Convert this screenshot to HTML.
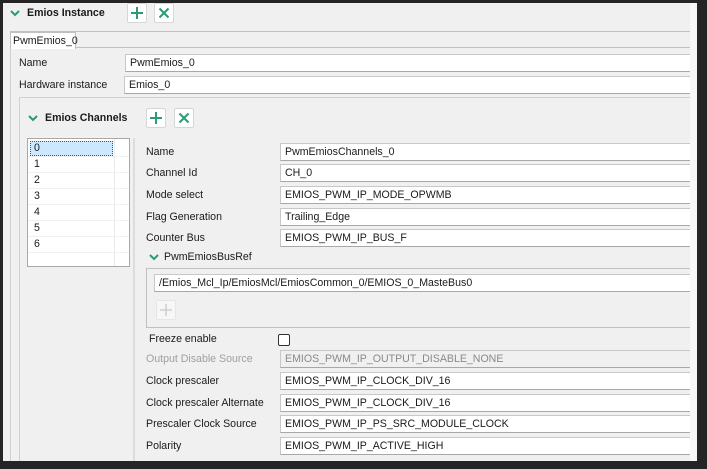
<!DOCTYPE html>
<html><head><style>
*{box-sizing:border-box;margin:0;padding:0}
body{width:707px;height:469px;background:#252526;position:relative;overflow:hidden;font-family:"Liberation Sans",sans-serif;font-size:10.6px;color:#1a1a1a}
.a{position:absolute}
.panel{left:3px;top:3px;width:687px;height:458px;background:#f0f0f0}
.strip{left:690px;top:3px;width:7px;height:458px;background:#f7f7f7}
.inp{position:absolute;background:#fff;border:1px solid #c8c8c8;border-bottom:1px solid #a8a8a8;height:18px;line-height:16px;padding-left:4px;border-right:none;white-space:nowrap}
.lbl{position:absolute;white-space:nowrap;line-height:14px}
.btn{position:absolute;width:20px;height:20px;background:#fff;border:1px solid #d6d6d6;border-radius:2px}
.chev{position:absolute;width:12px;height:8px}
.b{font-weight:bold}
</style></head><body>
<div class="a panel"></div>
<div class="a strip"></div>
<svg class="chev" style="left:9px;top:9px" viewBox="0 0 12 8"><path d="M2 2l4 4 4-4" stroke="#2a9a78" stroke-width="2" fill="none"/></svg>
<div class="lbl b" style="left:27px;top:6px">Emios Instance</div>
<div class="btn" style="left:127px;top:3px"><svg width="18" height="18"><path d="M9 3v12M3 9h12" stroke="#2a9a78" stroke-width="2"/></svg></div>
<div class="btn" style="left:154px;top:3px"><svg width="18" height="18"><path d="M4.5 4.5l9 9M13.5 4.5l-9 9" stroke="#2a9a78" stroke-width="2"/></svg></div>
<div class="a" style="left:10px;top:31px;width:680px;height:1px;background:#c0c0c0"></div>
<div class="a" style="left:10px;top:47px;width:680px;height:1px;background:#c0c0c0"></div>
<div class="a" style="left:10px;top:32px;width:66px;height:17px;background:#fff;border:1px solid #c0c0c0;border-bottom:none;padding:2px 0 0 2px;white-space:nowrap">PwmEmios_0</div>
<div class="a" style="left:10px;top:49px;width:680px;height:412px;background:#f0f0f0;border-left:1px solid #d0d0d0"></div>
<div class="lbl" style="left:19px;top:56px">Name</div>
<div class="inp" style="left:125px;top:54px;width:565px">PwmEmios_0</div>
<div class="lbl" style="left:19px;top:78px">Hardware instance</div>
<div class="inp" style="left:124px;top:76px;width:566px">Emios_0</div>
<div class="a" style="left:19px;top:97px;width:671px;height:364px;border:1px solid #d0d0d0;border-right:none;border-bottom:none"></div>
<svg class="chev" style="left:27px;top:114px" viewBox="0 0 12 8"><path d="M2 2l4 4 4-4" stroke="#2a9a78" stroke-width="2" fill="none"/></svg>
<div class="lbl b" style="left:45px;top:111px">Emios Channels</div>
<div class="btn" style="left:146px;top:108px"><svg width="18" height="18"><path d="M9 3v12M3 9h12" stroke="#2a9a78" stroke-width="2"/></svg></div>
<div class="btn" style="left:174px;top:108px"><svg width="18" height="18"><path d="M4.5 4.5l9 9M13.5 4.5l-9 9" stroke="#2a9a78" stroke-width="2"/></svg></div>
<div class="a" style="left:27px;top:138px;width:103px;height:129px;background:#fff;border:1px solid #a8a8a8"></div>
<div class="a" style="left:114px;top:139px;width:1px;height:127px;background:#eaeaea"></div>
<div class="a" style="left:30px;top:141px;width:83px;height:15px;background:#cce8ff;border:1px dotted #555"></div>
<div class="lbl" style="left:34px;top:141px">0</div>
<div class="lbl" style="left:34px;top:157px">1</div>
<div class="lbl" style="left:34px;top:173px">2</div>
<div class="lbl" style="left:34px;top:189px">3</div>
<div class="lbl" style="left:34px;top:205px">4</div>
<div class="lbl" style="left:34px;top:221px">5</div>
<div class="lbl" style="left:34px;top:237px">6</div>
<div class="a" style="left:28px;top:156px;width:101px;height:1px;background:#f0f0f0;box-shadow:0 16px #f0f0f0,0 32px #f0f0f0,0 48px #f0f0f0,0 64px #f0f0f0,0 80px #f0f0f0,0 96px #f0f0f0"></div>
<div class="a" style="left:133px;top:138px;width:2px;height:323px;background:#dcdcdc"></div>
<div class="lbl" style="left:146px;top:145px">Name</div>
<div class="inp" style="left:280px;top:143px;width:410px">PwmEmiosChannels_0</div>
<div class="lbl" style="left:146px;top:166px">Channel Id</div>
<div class="inp" style="left:280px;top:164px;width:410px">CH_0</div>
<div class="lbl" style="left:146px;top:188px">Mode select</div>
<div class="inp" style="left:280px;top:186px;width:410px">EMIOS_PWM_IP_MODE_OPWMB</div>
<div class="lbl" style="left:146px;top:210px">Flag Generation</div>
<div class="inp" style="left:280px;top:208px;width:410px">Trailing_Edge</div>
<div class="lbl" style="left:146px;top:231px">Counter Bus</div>
<div class="inp" style="left:280px;top:229px;width:410px">EMIOS_PWM_IP_BUS_F</div>
<svg class="chev" style="left:148px;top:253px" viewBox="0 0 12 8"><path d="M2 2l4 4 4-4" stroke="#2a9a78" stroke-width="2" fill="none"/></svg>
<div class="lbl" style="left:164px;top:250px">PwmEmiosBusRef</div>
<div class="a" style="left:146px;top:268px;width:544px;height:60px;border:1px solid #c0c0c0;border-right:none"></div>
<div class="inp" style="left:154px;top:274px;width:536px">/Emios_Mcl_Ip/EmiosMcl/EmiosCommon_0/EMIOS_0_MasteBus0</div>
<div class="a" style="left:156px;top:300px;width:20px;height:20px;background:#f7f7f7;border:1px solid #e6e6e6;border-radius:2px"><svg width="18" height="18"><path d="M9 3v12M3 9h12" stroke="#c8c8c8" stroke-width="1.3"/></svg></div>
<div class="lbl" style="left:149px;top:332px">Freeze enable</div>
<div class="a" style="left:278px;top:334px;width:12px;height:12px;background:#fff;border:1px solid #333;border-radius:2px"></div>
<div class="lbl" style="left:146px;top:352px;color:#a0a0a0">Output Disable Source</div>
<div class="inp" style="left:280px;top:350px;width:410px;background:#f0f0f0;color:#8a8a8a">EMIOS_PWM_IP_OUTPUT_DISABLE_NONE</div>
<div class="lbl" style="left:146px;top:374px">Clock prescaler</div>
<div class="inp" style="left:280px;top:372px;width:410px">EMIOS_PWM_IP_CLOCK_DIV_16</div>
<div class="lbl" style="left:146px;top:396px">Clock prescaler Alternate</div>
<div class="inp" style="left:280px;top:394px;width:410px">EMIOS_PWM_IP_CLOCK_DIV_16</div>
<div class="lbl" style="left:146px;top:417px">Prescaler Clock Source</div>
<div class="inp" style="left:280px;top:415px;width:410px">EMIOS_PWM_IP_PS_SRC_MODULE_CLOCK</div>
<div class="lbl" style="left:146px;top:439px">Polarity</div>
<div class="inp" style="left:280px;top:437px;width:410px">EMIOS_PWM_IP_ACTIVE_HIGH</div>
</body></html>
